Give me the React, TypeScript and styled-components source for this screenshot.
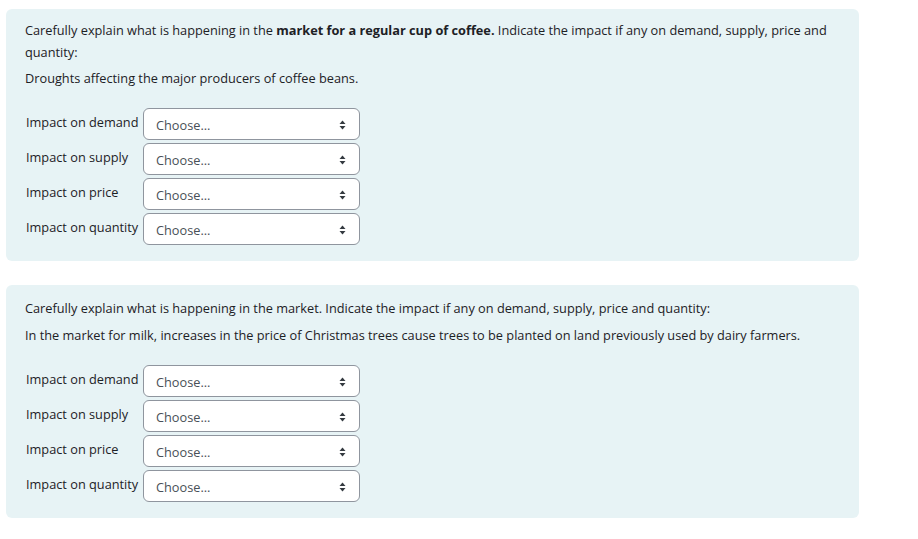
import React from "react";
import styled, { createGlobalStyle } from "styled-components";

const GlobalStyle = createGlobalStyle`
  body {
    margin: 0;
    background: #fff;
    font-family: "Open Sans", "Noto Sans", sans-serif;
    font-size: 12.75px;
    color: #1d2125;
  }
`;

const Page = styled.div`
  padding: 9px 0 0 6px;
  display: flex;
  flex-direction: column;
  gap: 24px;
`;

const Card = styled.div<{ $top: number }>`
  width: 853px;
  box-sizing: border-box;
  background: #e7f3f5;
  border-radius: 6px;
  padding: ${(p) => p.$top}px 19px 16px 19px;
`;

const Para = styled.p<{ $gap?: number }>`
  margin: 0 0 ${(p) => p.$gap ?? 6}px 0;
  line-height: 22px;
`;

const Rows = styled.div`
  display: grid;
  grid-template-columns: 117px 217px;
  row-gap: 3px;
  padding-left: 1px;
`;

const Label = styled.label`
  padding-top: 5px;
  white-space: nowrap;
  line-height: 18px;
`;

const Select = styled.div`
  height: 32px;
  box-sizing: border-box;
  border: 1px solid #8f959e;
  border-radius: 6px;
  background: #fff;
  display: flex;
  align-items: center;
  justify-content: space-between;
  padding: 2px 13px 0 12px;
  color: #495057;
  cursor: pointer;
`;

const Arrows = () => (
  <svg width="7" height="10" viewBox="0 0 7 10">
    <path d="M3.5 0.5 L6.5 4 L0.5 4 Z" fill="#343a40" />
    <path d="M3.5 9.5 L6.5 6 L0.5 6 Z" fill="#343a40" />
  </svg>
);

const fields = [
  "Impact on demand",
  "Impact on supply",
  "Impact on price",
  "Impact on quantity",
];

const Question: React.FC<{
  children: React.ReactNode;
  gap: number;
  top: number;
}> = ({ children, gap, top }) => (
  <Card $top={top}>
    {children}
    <div style={{ height: gap }} />
    <Rows>
      {fields.map((f) => (
        <React.Fragment key={f}>
          <Label>{f}</Label>
          <Select>
            <span>Choose...</span>
            <Arrows />
          </Select>
        </React.Fragment>
      ))}
    </Rows>
  </Card>
);

export default function App() {
  return (
    <>
      <GlobalStyle />
      <Page>
        <Question gap={13} top={10}>
          <Para $gap={4}>
            Carefully explain what is happening in the{" "}
            <b>market for a regular cup of coffee.</b> Indicate the impact if
            any on demand, supply, price and quantity:
          </Para>
          <Para>Droughts affecting the major producers of coffee beans.</Para>
        </Question>
        <Question gap={13} top={12}>
          <Para $gap={5}>
            Carefully explain what is happening in the market. Indicate the
            impact if any on demand, supply, price and quantity:
          </Para>
          <Para>
            In the market for milk, increases in the price of Christmas trees
            cause trees to be planted on land previously used by dairy farmers.
          </Para>
        </Question>
      </Page>
    </>
  );
}
